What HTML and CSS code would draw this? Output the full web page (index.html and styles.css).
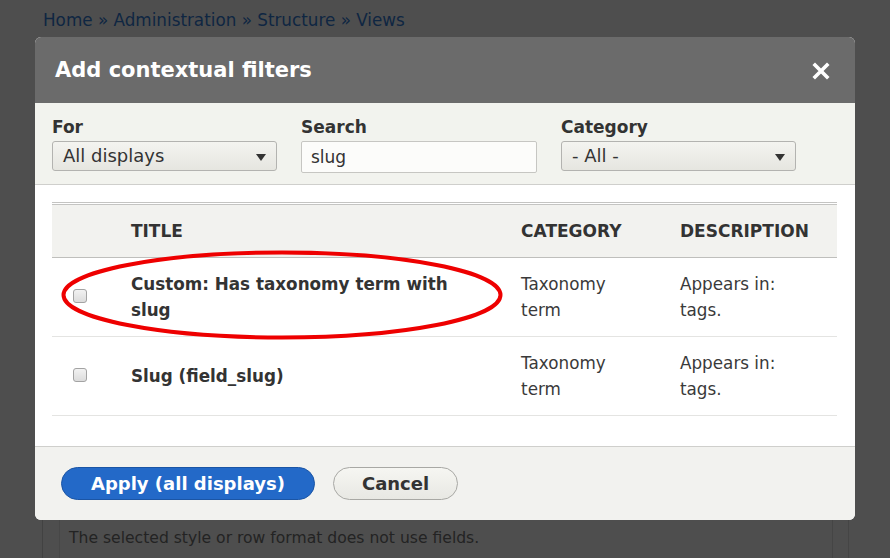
FILE: index.html
```html
<!DOCTYPE html>
<html lang="en">
<head>
  <meta charset="UTF-8" />
  <title>Views | Add contextual filters</title>
  <link rel="stylesheet" href="styles.css">
</head>
<body>

<!-- Page under the overlay -->
<div class="page">
  <div class="breadcrumb">
    <a href="#">Home</a> » <a href="#">Administration</a> » <a href="#">Structure</a> » <a href="#">Views</a>
  </div>
  <div class="under-panel">
    <div class="under-box">
      <p>The selected style or row format does not use fields.</p>
    </div>
  </div>
</div>

<!-- Modal dialog -->
<div class="dialog">
  <div class="dialog-title">
    <span>Add contextual filters</span>
    <a href="#" class="close" title="Close">
      <svg width="18" height="18" viewBox="0 0 18 18">
        <path d="M3 3 L15 15 M15 3 L3 15" stroke="#fff" stroke-width="3.6" stroke-linecap="square"/>
      </svg>
    </a>
  </div>

  <div class="filters">
    <div class="field field-for">
      <label>For</label>
      <div class="select">All displays<span class="arrow"></span></div>
    </div>
    <div class="field field-search">
      <label>Search</label>
      <div class="text-input">slug</div>
    </div>
    <div class="field field-cat">
      <label>Category</label>
      <div class="select">- All -<span class="arrow"></span></div>
    </div>
  </div>

  <div class="dialog-body">
    <table class="items">
      <thead>
        <tr>
          <th class="col-check"></th>
          <th class="col-title">Title</th>
          <th class="col-cat">Category</th>
          <th class="col-desc">Description</th>
        </tr>
      </thead>
      <tbody>
        <tr>
          <td class="col-check"><span class="checkbox"></span></td>
          <td class="col-title"><strong>Custom: Has taxonomy term with slug</strong></td>
          <td class="col-cat">Taxonomy term</td>
          <td class="col-desc">Appears in: tags.</td>
        </tr>
        <tr>
          <td class="col-check"><span class="checkbox"></span></td>
          <td class="col-title"><strong>Slug (field_slug)</strong></td>
          <td class="col-cat">Taxonomy term</td>
          <td class="col-desc">Appears in: tags.</td>
        </tr>
      </tbody>
    </table>

    <!-- red annotation circle -->
    <svg class="annotation" width="450" height="96" viewBox="0 0 450 96">
      <ellipse cx="225" cy="48" rx="218.5" ry="42.5" fill="none" stroke="#ee0000" stroke-width="4"/>
    </svg>
  </div>

  <div class="dialog-footer">
    <button class="btn btn-primary">Apply (all displays)</button>
    <button class="btn">Cancel</button>
  </div>
</div>

</body>
</html>
```

FILE: styles.css
```css
body, html {
  margin: 0;
  font-family: "DejaVu Sans", "Liberation Sans", sans-serif;
  background: #4e4e4e;
  color: #333;
}

.page {
  width: 890px;
  height: 558px;
  overflow: hidden;
}

.breadcrumb {
  padding: 9px 0 0 43px;
  font-size: 16.8px;
  line-height: 22px;
  color: #0f2642;
}

.breadcrumb a {
  color: #0f2642;
  text-decoration: none;
}

.under-panel {
  margin: 487px 0 0 42px;
  width: 806px;
  height: 40px;
  border-right: 1px solid #454545;
}

.under-box {
  width: 789px;
  height: 40px;
  border-left: 1px solid #424242;
  border-right: 1px solid #454545;
}

.under-box p {
  margin: 0 0 0 16px;
  padding: 11px 0 0 9px;
  border-left: 1px solid #474747;
  height: 29px;
  font-size: 15.6px;
  color: #232323;
}

/* dialog */
.dialog {
  position: absolute;
  left: 35px;
  top: 37px;
  width: 820px;
  height: 483px;
  border-radius: 6px;
  overflow: hidden;
  background: #fff;
  display: flex;
  flex-direction: column;
}

.dialog-title {
  height: 66px;
  background: #6b6b6b;
  color: #fff;
  display: flex;
  align-items: center;
  justify-content: space-between;
  padding: 0 25px 0 20px;
  font-size: 21px;
  font-weight: bold;
}

.dialog-title .close {
  display: flex;
  margin-top: 2px;
}

.filters {
  background: #f2f3ee;
  border-bottom: 1px solid #cfcfcc;
  display: flex;
  gap: 24px;
  padding: 0 17px;
  box-sizing: border-box;
  height: 82px;
}

.field label {
  display: block;
  font-weight: bold;
  font-size: 17px;
  line-height: 20px;
  margin: 14px 0 4px;
  color: #333;
}

.field-for { width: 225px; }
.field-search { width: 236px; }
.field-cat { width: 235px; }

.select {
  position: relative;
  height: 30px;
  box-sizing: border-box;
  border: 1px solid #b3b3b0;
  border-radius: 3px;
  background: linear-gradient(#f4f4f0, #e6e6e0);
  font-size: 18px;
  line-height: 28px;
  padding-left: 10px;
  color: #333;
}

.arrow {
  position: absolute;
  right: 10px;
  top: 12px;
  width: 0;
  height: 0;
  border-left: 5px solid transparent;
  border-right: 5px solid transparent;
  border-top: 7px solid #333;
}

.text-input {
  height: 32px;
  box-sizing: border-box;
  border: 1px solid #c6c6c2;
  border-radius: 2px;
  background: #fcfcfa;
  font-size: 17px;
  line-height: 30px;
  padding-left: 9px;
  color: #333;
}

.dialog-body {
  position: relative;
  flex: 1;
  padding: 17px 18px 0 17px;
}

.items {
  width: 785px;
  border-collapse: collapse;
  border-top: 3px double #c4c4c2;
  font-size: 16.8px;
}

.items th {
  background: #f2f2ef;
  height: 52px;
  padding: 0 20px 0 20px;
  text-align: left;
  text-transform: uppercase;
  font-size: 17px;
  border-bottom: 1px solid #bfbfbc;
  color: #333;
}

.items td {
  height: 79px;
  box-sizing: border-box;
  padding: 0 20px 0 20px;
  line-height: 26px;
  border-bottom: 1px solid #e4e4e2;
  color: #3a3a3a;
}

.items .col-check { width: 38px; padding: 0 0 0 21px; }
.items .col-title { width: 351px; }
.items .col-cat { width: 119px; }
.items .col-desc { width: 137px; }

.items td strong {
  color: #333;
  display: block;
}

.checkbox {
  display: block;
  width: 14px;
  height: 14px;
  box-sizing: border-box;
  border: 1px solid #a3a3a3;
  border-radius: 3px;
  background: linear-gradient(#f2f2f2, #dcdcdc);
  margin-top: -3px;
}

.annotation {
  position: absolute;
  left: 22px;
  top: 62px;
}

.dialog-footer {
  height: 74px;
  box-sizing: border-box;
  background: #f2f2ef;
  border-top: 1px solid #cfcfcc;
  padding: 20px 0 0 26px;
  display: flex;
  gap: 18px;
  align-items: flex-start;
}

.btn {
  height: 33px;
  padding: 0 28px;
  border-radius: 17px;
  border: 1px solid #a8a8a4;
  background: linear-gradient(#f6f6f2, #e8e8e3);
  font-family: "DejaVu Sans", sans-serif;
  font-size: 18px;
  font-weight: bold;
  color: #333;
  cursor: pointer;
}

.btn-primary {
  background: #2369c8;
  border-color: #1b55a5;
  color: #fff;
  padding: 0 29px;
}
```
